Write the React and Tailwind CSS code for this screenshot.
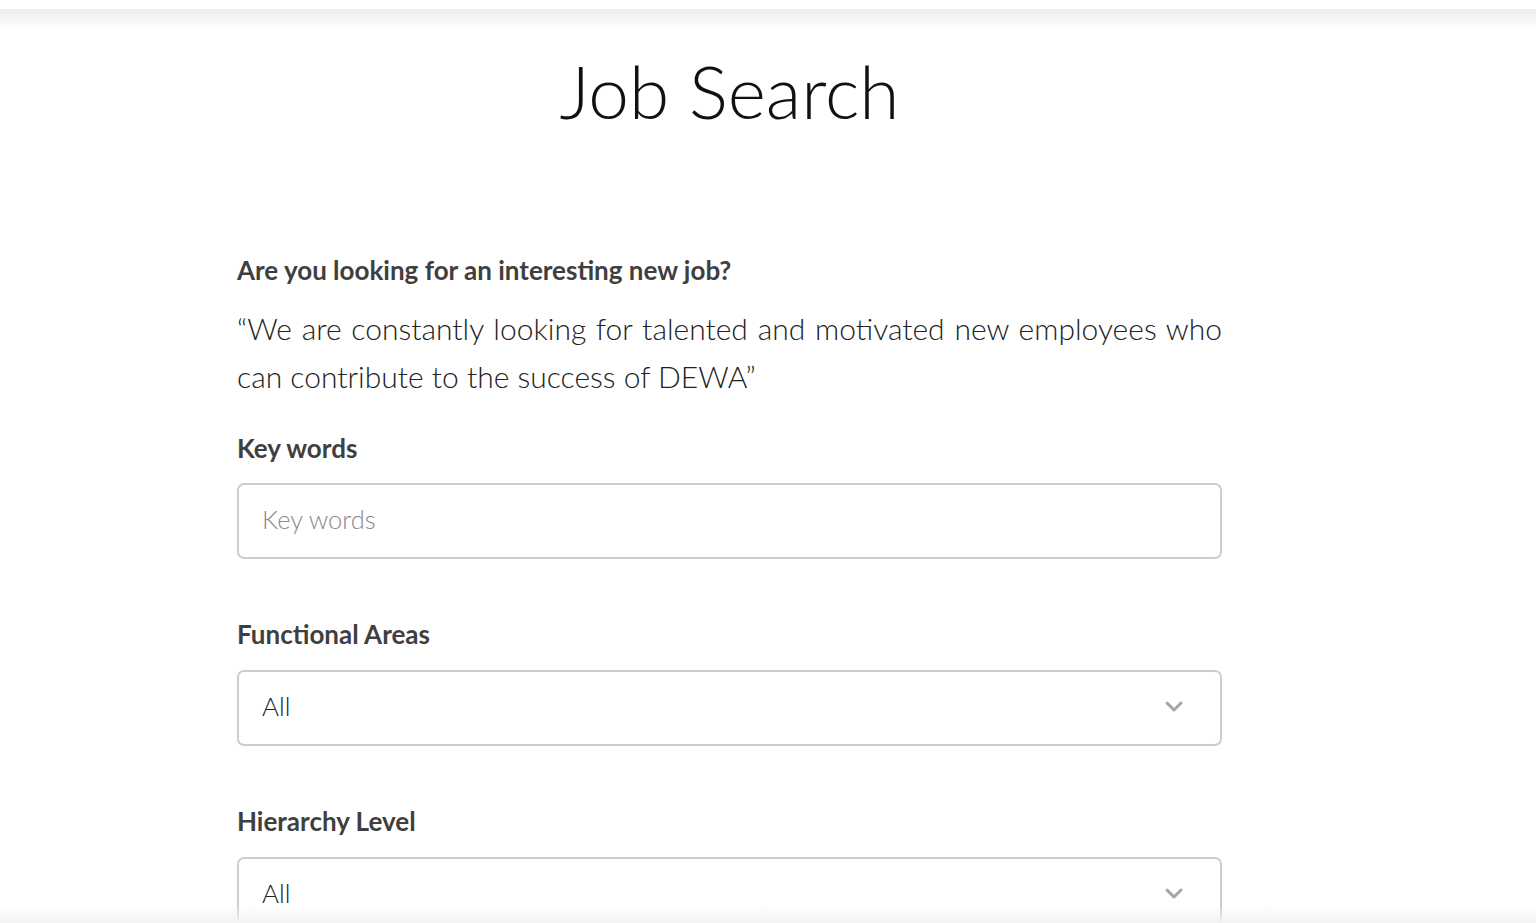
import React from "react";

const Chevron = () => (
  <svg width="20" height="14" viewBox="0 0 20 14" fill="none" className="text-[#a5a5a5]">
    <path d="M3 4l7 7 7-7" stroke="currentColor" strokeWidth="3" strokeLinecap="round" strokeLinejoin="round" />
  </svg>
);

const SelectField = ({ label }) => (
  <div className="mt-[59px]">
    <div className="text-[26px] font-bold text-[#3f3f3f] leading-[32px]">{label}</div>
    <div className="mt-[20px] h-[76px] rounded-[7px] border-2 border-[#cdcdcd] flex items-center justify-between pl-[23px] pr-[36px] pb-[4px]">
      <span className="text-[26px] font-light text-[#222]">All</span>
      <Chevron />
    </div>
  </div>
);

const App = () => {
  return (
    <div className="min-h-screen bg-white font-['Lato',sans-serif] relative overflow-hidden h-[923px]">
      <div className="h-[9px] bg-white" />
      <div className="h-[20px] bg-gradient-to-b from-[#ededed] to-white" />

      <div className="w-[985px] ml-[237px]">
        <h1 className="text-center text-[73px] font-light leading-[90px] text-[#111] mt-[17px]">
          Job Search
        </h1>

        <div className="mt-[118px] text-[26px] font-bold text-[#3f3f3f] leading-[32px]">
          Are you looking for an interesting new job?
        </div>
        <p className="mt-[18px] text-[30px] font-light text-[#222] leading-[48px] text-justify">
          “We are constantly looking for talented and motivated new employees who can contribute to the success of DEWA”
        </p>

        <div className="mt-[32px] text-[26px] font-bold text-[#3f3f3f] leading-[32px]">Key words</div>
        <div className="mt-[19px] h-[76px] rounded-[7px] border-2 border-[#cdcdcd] flex items-center pl-[23px] pb-[4px]">
          <input
            className="w-full outline-none text-[25.5px] font-light text-[#222] placeholder:text-[#8a8a8a] bg-transparent"
            placeholder="Key words"
          />
        </div>

        <SelectField label="Functional Areas" />
        <SelectField label="Hierarchy Level" />
      </div>

      <div className="pointer-events-none absolute left-0 right-0 bottom-0 h-[18px] bg-gradient-to-t from-[#f3f3f3] to-transparent" />
    </div>
  );
};

export default App;
